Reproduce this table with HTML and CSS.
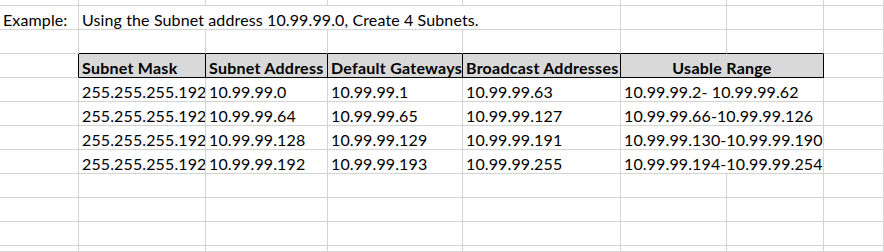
FILE: index.html
```html
<!DOCTYPE html>
<html lang="en">
<head>
<meta charset="utf-8">
<title>Subnets</title>
<link rel="stylesheet" href="styles.css">
</head>
<body>
<div class="sheet">
  <!-- row 0 (partial) -->
  <div class="c"></div><div class="c"></div><div class="c"></div><div class="c"></div><div class="c"></div><div class="c"></div><div class="c"></div><div class="c"></div>
  <!-- row 1 -->
  <div class="c">Example:</div>
  <div class="c span4">Using the Subnet address 10.99.99.0, Create 4 Subnets.</div>
  <div class="c"></div><div class="c"></div><div class="c"></div>
  <!-- row 2 -->
  <div class="c"></div>
  <div class="c above"></div><div class="c above"></div><div class="c above"></div><div class="c above"></div><div class="c above"></div><div class="c above"></div>
  <div class="c"></div>
  <!-- row 3 header -->
  <div class="c edge"></div>
  <div class="c hd">Subnet Mask</div>
  <div class="c hd">Subnet Address</div>
  <div class="c hd">Default Gateways</div>
  <div class="c hd">Broadcast Addresses</div>
  <div class="c hd span2 center">Usable Range</div>
  <div class="c"></div>
  <!-- data rows -->
  <div class="c"></div><div class="c">255.255.255.192</div><div class="c">10.99.99.0</div><div class="c">10.99.99.1</div><div class="c">10.99.99.63</div><div class="c span2">10.99.99.2- 10.99.99.62</div><div class="c"></div>
  <div class="c"></div><div class="c">255.255.255.192</div><div class="c">10.99.99.64</div><div class="c">10.99.99.65</div><div class="c">10.99.99.127</div><div class="c span2">10.99.99.66-10.99.99.126</div><div class="c"></div>
  <div class="c"></div><div class="c">255.255.255.192</div><div class="c">10.99.99.128</div><div class="c">10.99.99.129</div><div class="c">10.99.99.191</div><div class="c span2">10.99.99.130-10.99.99.190</div><div class="c"></div>
  <div class="c"></div><div class="c">255.255.255.192</div><div class="c">10.99.99.192</div><div class="c">10.99.99.193</div><div class="c">10.99.99.255</div><div class="c span2">10.99.99.194-10.99.99.254</div><div class="c"></div>
  <!-- empty rows -->
  <div class="c"></div><div class="c"></div><div class="c"></div><div class="c"></div><div class="c"></div><div class="c"></div><div class="c"></div><div class="c"></div>
  <div class="c"></div><div class="c"></div><div class="c"></div><div class="c"></div><div class="c"></div><div class="c"></div><div class="c"></div><div class="c"></div>
  <div class="c"></div><div class="c"></div><div class="c"></div><div class="c"></div><div class="c"></div><div class="c"></div><div class="c"></div><div class="c"></div>
  <div class="c"></div><div class="c"></div><div class="c"></div><div class="c"></div><div class="c"></div><div class="c"></div><div class="c"></div><div class="c"></div>
</div>
</body>
</html>
```
FILE: styles.css
```css
html, body {
  margin: 0;
  padding: 0;
  background: #ffffff;
}
.sheet {
  display: grid;
  grid-template-columns: 79px 127px 122px 135px 158px 106px 97px 1fr;
  grid-template-rows: 6px repeat(10, 24px) 1fr;
  height: 252px;
  width: 884px;
  font-family: "Lato", "Liberation Sans", sans-serif;
  font-size: 16px;
  letter-spacing: 0.12px;
  color: #000;
}
.c {
  box-sizing: border-box;
  border-right: 1px solid #d4d4d4;
  border-bottom: 1px solid #d4d4d4;
  padding: 0 0 0 3px;
  line-height: 19px;
  white-space: nowrap;
  overflow: hidden;
  display: flex;
  align-items: flex-end;
}
.span4 { grid-column: span 4; }
.span2 { grid-column: span 2; }
.center { justify-content: center; padding-left: 0; }
.above { border-bottom-color: #000; }
.edge { border-right-color: #000; }
.hd {
  background: #d9d9d9;
  font-weight: 700;
  letter-spacing: 0.25px;
  border-right-color: #000;
  border-bottom-color: #000;
}
```
